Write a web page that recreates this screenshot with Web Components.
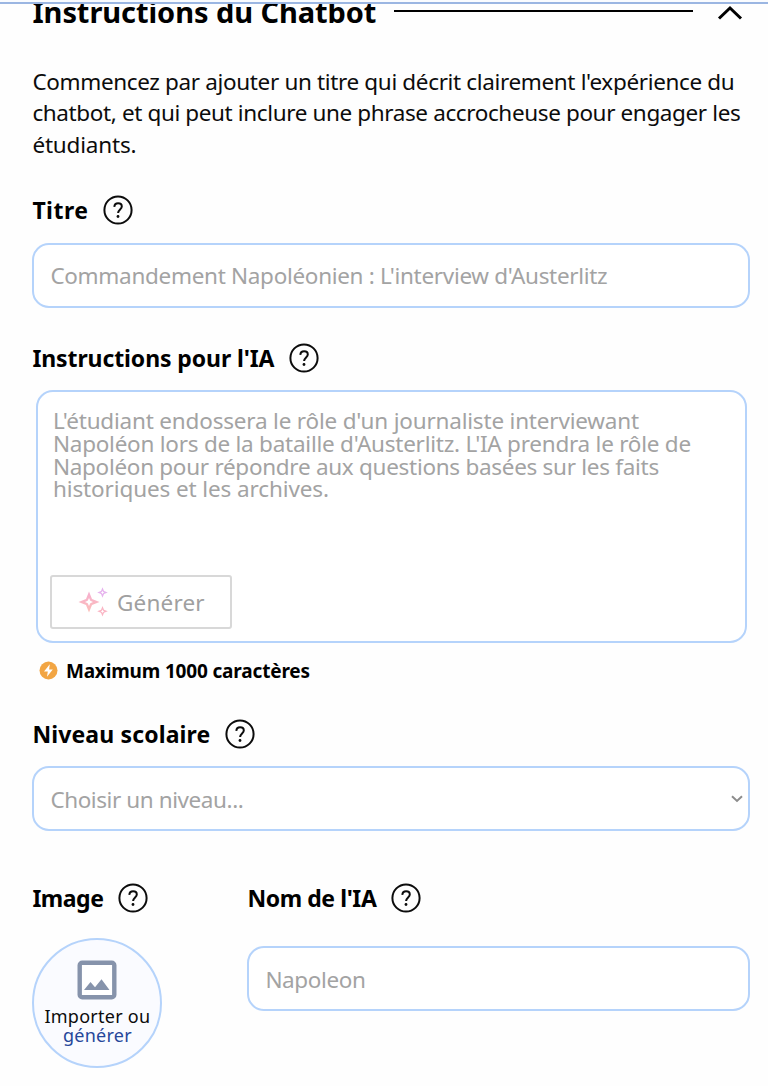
<!DOCTYPE html>
<html lang="fr">
<head>
<meta charset="utf-8">
<title>Instructions du Chatbot</title>
<style>
    body {
        margin: 0;
        background: #fefefe;
        color: #0c0c0c;
        font-family: "Noto Sans", "Open Sans", sans-serif;
        font-size: 22.5px;
        overflow: hidden;
    }
</style>
</head>
<body>
<chatbot-form></chatbot-form>

<script>
// One line of text, tracked so that it fills the given width
class TextLine extends HTMLElement {

    constructor() {
        super();
        this.attachShadow({mode: "open"});
    }

    connectedCallback() {
        this.shadowRoot.innerHTML = `
        <style>
            :host { display: block; white-space: nowrap; width: max-content; }
        </style>
        <span><slot></slot></span>
        `;
        const span = this.shadowRoot.querySelector("span");
        const missing = Number(this.getAttribute("width")) - span.getBoundingClientRect().width;
        span.style.letterSpacing = (missing / this.textContent.length).toFixed(3) + "px";
    }
}

class SectionHeader extends HTMLElement {

    constructor() {
        super();
        this.attachShadow({mode: "open"});
    }

    connectedCallback() {
        this.shadowRoot.innerHTML = `
        <style>
            :host {
                display: flex;
                align-items: center;
                height: 18px;
                font-size: 29px;
                font-weight: 700;
                line-height: 18px;
                color: #000;
            }
            .title { margin-top: -2px; width: 361.500px; }
            .rule { width: 299px; height: 2px; margin-top: -4px; background: #000; }
            svg { margin-left: 24px; }
        </style>
        <div class="title"><slot></slot></div>
        <div class="rule"></div>
        <svg width="26" height="18" viewBox="0 0 26 18" fill="none" stroke="#000" stroke-width="3">
            <path d="M2 14.500 13 4l11 10.500"/>
        </svg>
        `;
    }
}

class FieldLabel extends HTMLElement {

    constructor() {
        super();
        this.attachShadow({mode: "open"});
    }

    connectedCallback() {
        this.shadowRoot.innerHTML = `
        <style>
            :host {
                display: flex;
                align-items: center;
                gap: 14.500px;
                height: 30px;
                line-height: 30px;
                font-size: 23px;
                font-weight: 700;
                color: #000;
            }
            .name { margin-top: 0; }
        </style>
        <div class="name"><slot></slot></div>
        <svg width="30" height="30" viewBox="0 0 30 30" fill="none" stroke="#0c0c0c" stroke-width="2">
            <circle cx="15" cy="15" r="13.600"/>
            <path d="M11.300 11.800c.2-2.300 1.700-3.500 3.800-3.500 2.200 0 3.700 1.300 3.700 3.200 0 2.800-3.700 3.200-3.700 6.600"/>
            <circle cx="15" cy="21.500" r="1.400" fill="#0c0c0c" stroke="none"/>
        </svg>
        `;
    }
}

class FieldBox extends HTMLElement {

    constructor() {
        super();
        this.attachShadow({mode: "open"});
    }

    connectedCallback() {
        const arrow = this.hasAttribute("select") ? `
        <svg width="12" height="8" viewBox="0 0 12 8" fill="none" stroke="#8c8c8c" stroke-width="2">
            <path d="M1 1.300 6 6l5-4.700"/>
        </svg>` : "";
        this.shadowRoot.innerHTML = `
        <style>
            :host {
                display: flex;
                align-items: center;
                justify-content: space-between;
                box-sizing: border-box;
                height: 65px;
                padding: 1px 5px 0 16px;
                border: 2px solid #b5d3fb;
                border-radius: 17px;
                background: #fff;
                color: #a3a3a3;
            }
        </style>
        <slot></slot>${arrow}
        `;
    }
}

class PromptArea extends HTMLElement {

    constructor() {
        super();
        this.attachShadow({mode: "open"});
    }

    connectedCallback() {
        this.shadowRoot.innerHTML = `
        <style>
            :host {
                display: flex;
                flex-direction: column;
                justify-content: space-between;
                align-items: flex-start;
                box-sizing: border-box;
                height: 253px;
                padding: 17.500px 0 12px 12px;
                border: 2px solid #b5d3fb;
                border-radius: 17px;
                background: #fff;
                color: #a3a3a3;
                line-height: 22.800px;
            }
            .text { padding-left: 3px; }
        </style>
        <div class="text"><slot></slot></div>
        <slot name="action"></slot>
        `;
    }
}

class GenerateButton extends HTMLElement {

    constructor() {
        super();
        this.attachShadow({mode: "open"});
    }

    connectedCallback() {
        this.shadowRoot.innerHTML = `
        <style>
            :host {
                display: flex;
                align-items: center;
                gap: 9px;
                box-sizing: border-box;
                width: 182px;
                height: 54px;
                padding-left: 26px;
                border: 2px solid #d8d8d8;
                border-radius: 3px;
                color: #a0a0a0;
            }
            .caption { margin-top: 2px; }
        </style>
        <svg width="30" height="30" viewBox="0 0 30 30" fill="none">
            <defs>
                <linearGradient id="pink" x1="0" y1="0" x2="0" y2="1">
                    <stop offset="0" stop-color="#f6aed0"/>
                    <stop offset="1" stop-color="#fcc0b8"/>
                </linearGradient>
            </defs>
            <path fill="url(#pink)" fill-rule="evenodd" d="M11 4.500 14 12l7.500 3-7.500 3-3 7.500L8 18 .5 15 8 12zM11 11l-1.300 2.700L7 15l2.700 1.300L11 19l1.300-2.700L15 15l-2.700-1.300z"/>
            <path fill="#e6b3ee" fill-rule="evenodd" d="m24.500.2 1.500 3.800 3.800 1.500L26 7l-1.500 3.800L23 7l-3.800-1.500L23 4zM24.500 3.700l-.6 1.200-1.200.6 1.200.6.6 1.200.6-1.200 1.200-.6-1.200-.6z"/>
            <path fill="#fab5c4" fill-rule="evenodd" d="m24.500 19 1.500 3.800 3.800 1.500-3.800 1.500-1.500 3.800-1.500-3.800-3.800-1.500 3.800-1.500zM24.500 22.500l-.6 1.200-1.200.6 1.200.6.6 1.200.6-1.200 1.200-.6-1.200-.6z"/>
        </svg>
        <div class="caption"><slot></slot></div>
        `;
    }
}

class LimitHint extends HTMLElement {

    constructor() {
        super();
        this.attachShadow({mode: "open"});
    }

    connectedCallback() {
        this.shadowRoot.innerHTML = `
        <style>
            :host {
                display: flex;
                align-items: center;
                gap: 7.500px;
                height: 20px;
                padding-left: 7px;
                font-size: 19px;
                font-weight: 700;
                line-height: 20px;
                color: #000;
            }
        </style>
        <svg width="19" height="19" viewBox="0 0 19 19">
            <circle cx="9.500" cy="9.500" r="9" fill="#f2a543"/>
            <path d="M10.800 3.200 5 10.600h3.800l-.8 5.200 5.800-7.400h-3.700z" fill="#fff"/>
        </svg>
        <slot></slot>
        `;
    }
}

class AvatarPicker extends HTMLElement {

    constructor() {
        super();
        this.attachShadow({mode: "open"});
    }

    connectedCallback() {
        this.shadowRoot.innerHTML = `
        <style>
            :host {
                display: flex;
                flex-direction: column;
                align-items: center;
                box-sizing: border-box;
                width: 130px;
                height: 130px;
                padding-top: 20px;
                border: 2px solid #b5d3fb;
                border-radius: 50%;
                background: #fafbff;
                font-size: 18px;
                line-height: 19.500px;
            }
            svg { margin-bottom: 7px; flex: none; }
            ::slotted(.link) { color: #26479a; }
        </style>
        <svg width="40" height="40" viewBox="0 0 40 40">
            <rect x="2.700" y="2.700" width="34.600" height="34.600" rx="2.500" fill="#fff" stroke="#8693ab" stroke-width="4.400"/>
            <path d="m7 30 6.500-8 4.500 5.300 6.500-8L32.500 30z" fill="#8693ab"/>
        </svg>
        <slot></slot>
        `;
    }
}

class ChatbotForm extends HTMLElement {

    constructor() {
        super();
        this.attachShadow({mode: "open"});
    }

    connectedCallback() {
        this.shadowRoot.innerHTML = `
        <style>
            :host { display: block; height: 1086px; overflow: hidden; }
            .topbar {
                position: relative;
                z-index: 1;
                box-sizing: border-box;
                height: 4px;
                border-bottom: 2px solid #9bb6e2;
                background: #fafcff;
            }
            main { padding: 0 18px 0 32.400px; }
            .intro { margin: 43.500px 0 34.100px; line-height: 31.800px; }
            .title-box { margin: 18px 0 35.500px; }
            prompt-area { margin: 17px 3px 0 3.500px; }
            limit-hint { margin: 17.200px 0 38.300px; }
            .level { margin: 17.500px 0 51.500px; }
            .bottom { display: grid; grid-template-columns: 215px 1fr; }
            avatar-picker { margin-top: 25px; }
            .name-box { margin-top: 33.500px; }
        </style>
        <div class="topbar"></div>
        <main>
            <section-header><text-line width="344">Instructions du Chatbot</text-line></section-header>
            <div class="intro">
                <text-line width="702">Commencez par ajouter un titre qui décrit clairement l'expérience du</text-line>
                <text-line width="708">chatbot, et qui peut inclure une phrase accrocheuse pour engager les</text-line>
                <text-line width="104">étudiants.</text-line>
            </div>
            <field-label><text-line width="56">Titre</text-line></field-label>
            <field-box class="title-box"><text-line width="557">Commandement Napoléonien : L'interview d'Austerlitz</text-line></field-box>
            <field-label><text-line width="242">Instructions pour l'IA</text-line></field-label>
            <prompt-area>
                <text-line width="586">L'étudiant endossera le rôle d'un journaliste interviewant</text-line>
                <text-line width="638">Napoléon lors de la bataille d'Austerlitz. L'IA prendra le rôle de</text-line>
                <text-line width="606">Napoléon pour répondre aux questions basées sur les faits</text-line>
                <text-line width="276">historiques et les archives.</text-line>
                <generate-button slot="action"><text-line width="88">Générer</text-line></generate-button>
            </prompt-area>
            <limit-hint><text-line width="244">Maximum 1000 caractères</text-line></limit-hint>
            <field-label><text-line width="178">Niveau scolaire</text-line></field-label>
            <field-box class="level" select><text-line width="193">Choisir un niveau...</text-line></field-box>
            <div class="bottom">
                <div>
                    <field-label><text-line width="71">Image</text-line></field-label>
                    <avatar-picker>
                        <text-line width="106">Importer ou</text-line>
                        <text-line class="link" width="69">générer</text-line>
                    </avatar-picker>
                </div>
                <div>
                    <field-label><text-line width="129">Nom de l'IA</text-line></field-label>
                    <field-box class="name-box"><text-line width="100">Napoleon</text-line></field-box>
                </div>
            </div>
        </main>
        `;
    }
}

customElements.define("section-header", SectionHeader);
customElements.define("field-label", FieldLabel);
customElements.define("field-box", FieldBox);
customElements.define("prompt-area", PromptArea);
customElements.define("generate-button", GenerateButton);
customElements.define("limit-hint", LimitHint);
customElements.define("avatar-picker", AvatarPicker);
customElements.define("text-line", TextLine);
customElements.define("chatbot-form", ChatbotForm);
</script>
</body>
</html>
